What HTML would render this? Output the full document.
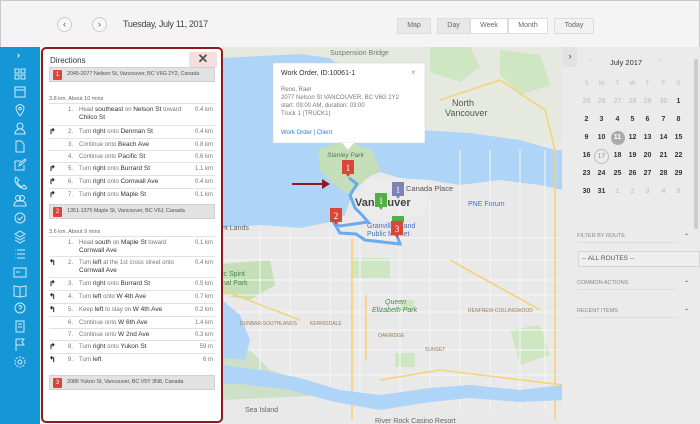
<!DOCTYPE html>
<html><head><meta charset="utf-8"><style>
*{margin:0;padding:0;box-sizing:border-box}
body{width:700px;height:424px;overflow:hidden;font-family:"Liberation Sans",sans-serif;background:#f4f4f4;position:relative;color:#333}
.top{position:absolute;left:0;top:0;width:700px;height:47px;background:#f4f4f4;border:1px solid #c8c8c8;border-bottom:none}
.circ{position:absolute;top:16px;width:15px;height:15px;border:1px solid #ccc;border-radius:50%;font-size:9px;line-height:13px;text-align:center;color:#555;background:#f7f7f7}
.btn{position:absolute;top:17px;height:16px;border:1px solid #ddd;font-size:7px;line-height:14px;text-align:center;color:#666}
.nav{position:absolute;left:0;top:47px;width:40px;height:377px;background:#1596d6}
.nav svg{position:absolute;left:13px}
.panel{position:absolute;left:41px;top:47px;width:182px;height:376px;background:#fff;border:2px solid #8e1b1b;border-radius:5px;overflow:hidden}
.map{position:absolute;left:222px;top:47px;width:341px;height:377px;overflow:hidden;background:#e9e9e9}
.side{position:absolute;left:562px;top:47px;width:138px;height:377px;background:#ebebeb}
.addr{position:absolute;left:6px;width:166px;height:15px;background:#e2e2e2;border:1px solid #d0d0d0;font-size:5.5px;line-height:13px;padding-left:17px;color:#555;letter-spacing:-0.1px}
.pin{position:absolute;left:3px;top:2px;width:9px;height:10px;background:#d9473a;border-radius:1px;color:#fff;font-size:6px;line-height:10px;text-align:center}
.sum{position:absolute;left:6px;font-size:5.5px;color:#666}
.row{position:absolute;left:6px;width:166px;border-top:1px solid #e2e2e2;font-size:6px;color:#777;line-height:8px}
.row .n{position:absolute;left:19px;top:2px}
.row .t{position:absolute;left:30px;top:2px;width:110px}
.row .d{position:absolute;right:2px;top:2px}
.row b{color:#333;font-weight:normal;font-size:6.5px}
.row .ar{position:absolute;left:0;top:2px;font-size:8px;color:#222;font-weight:bold}
.cal{position:absolute;font-size:7px;color:#333;text-align:center;width:15px}
.sh{position:absolute;left:15px;font-size:5.5px;color:#888;width:100px;border-bottom:1px solid #ddd;padding-bottom:3px}
.sh span{position:absolute;right:-12px;color:#444;font-size:6px}
</style></head><body>
<div class="top">
 <div class="circ" style="left:56px">‹</div>
 <div class="circ" style="left:91px">›</div>
 <div style="position:absolute;left:122px;top:18px;font-size:9px;color:#444;letter-spacing:-0.3px">Tuesday, July 11, 2017</div>
 <div class="btn" style="left:396px;width:34px;background:#e8e8e8">Map</div>
 <div class="btn" style="left:436px;width:33px;background:#e8e8e8">Day</div>
 <div class="btn" style="left:469px;width:38px;background:#fff">Week</div>
 <div class="btn" style="left:507px;width:40px;background:#fff">Month</div>
 <div class="btn" style="left:553px;width:40px;background:#f2f2f2">Today</div>
</div>
<div class="nav">
 <div style="position:absolute;left:17px;top:3px;color:#fff;font-size:9px;font-weight:bold">›</div>
 <svg width="14" height="320" style="top:21px" fill="none" stroke="#cfe9f7" stroke-width="1">
  <g transform="translate(0,0)"><rect x="2" y="1" width="4" height="4"/><rect x="8" y="1" width="4" height="4"/><rect x="2" y="7" width="4" height="4"/><rect x="8" y="7" width="4" height="4"/></g>
  <g transform="translate(0,18)"><rect x="2" y="1" width="10" height="10"/><line x1="2" y1="4" x2="12" y2="4"/></g>
  <g transform="translate(0,36)"><path d="M7 12C4 8 3 6 3 4.5a4 4 0 0 1 8 0C11 6 10 8 7 12z"/><circle cx="7" cy="4.5" r="1.3"/></g>
  <g transform="translate(0,54)"><circle cx="7" cy="4" r="3"/><path d="M2 12c0-3 2-5 5-5s5 2 5 5z"/></g>
  <g transform="translate(0,72)"><path d="M3 1h5l3 3v8H3z"/></g>
  <g transform="translate(0,90)"><path d="M2 3h6M2 3v9h9V7"/><path d="M6 8l1-3 5-4 1 1-5 5z"/></g>
  <g transform="translate(0,108)"><path d="M3 1l3 3-2 2c1 2 3 4 5 5l2-2 3 3-2 1C6 12 2 8 2 3z"/></g>
  <g transform="translate(0,126)"><circle cx="5" cy="4" r="2.5"/><circle cx="9" cy="4" r="2.5"/><path d="M1 12c0-3 2-5 4-5h4c2 0 4 2 4 5z"/></g>
  <g transform="translate(0,144)"><circle cx="7" cy="6" r="5"/><path d="M4.5 6l2 2 3-3.5"/></g>
  <g transform="translate(0,162)"><path d="M7 1l5 3-5 3-5-3z M2 7l5 3 5-3 M2 10l5 3 5-3"/></g>
  <g transform="translate(0,180)"><path d="M4 2h8M4 6h8M4 10h8M2 2h0.5M2 6h0.5M2 10h0.5"/></g>
  <g transform="translate(0,198)"><rect x="1" y="2" width="12" height="9"/><path d="M3 6h4"/></g>
  <g transform="translate(0,216)"><path d="M1 2l6 1 6-1v10l-6 1-6-1z M7 3v10"/></g>
  <g transform="translate(0,234)"><circle cx="7" cy="6" r="5"/><path d="M5.5 4.5a1.5 1.5 0 1 1 1.5 2v1M7 9v.5"/></g>
  <g transform="translate(0,252)"><rect x="3" y="1" width="8" height="11"/><path d="M5 4h4M5 7h4"/></g>
  <g transform="translate(0,270)"><path d="M3 13V1M3 1h8l-2 3 2 3H3"/></g>
  <g transform="translate(0,288)"><circle cx="7" cy="6" r="2"/><circle cx="7" cy="6" r="5" stroke-dasharray="2 1.2"/></g>
 </svg>
</div>
<div class="map">
<svg width="341" height="377" viewBox="222 47 341 377">
 <rect x="222" y="47" width="341" height="377" fill="#e9e9e9"/>
 <path d="M222 47h341v95H222z" fill="#e6e9e0"/>
 <path d="M430 47l40 0 10 20-20 15-30-10z M500 50l40 5 10 30-30 10-20-20z" fill="#cfe6c2"/>
 <path d="M222 58 L300 54 L330 58 L345 70 L350 95 L365 128 L420 130 L470 133 L520 140 L555 150 L563 150 L563 190 L540 185 L500 180 L460 185 L430 180 L400 178 L380 172 L360 180 L350 200 L345 215 L330 222 L300 228 L260 225 L222 228 Z" fill="#aed4f7"/>
 <path d="M318 150 L345 140 L372 150 L380 170 L365 180 L350 195 L335 185 L320 170 Z" fill="#c5dfb8"/>
 <path d="M365 180 L400 178 L430 182 L425 215 L385 222 L352 215 Z" fill="#ececec"/>
 <path d="M222 264 L270 260 L275 285 L250 300 L222 295Z" fill="#c5dfb8"/>
 <rect x="352" y="258" width="38" height="20" fill="#cfe6c2"/>
 <rect x="400" y="300" width="14" height="10" fill="#cfe6c2"/>
 <rect x="395" y="353" width="20" height="14" fill="#cfe6c2"/>
 <path d="M510 330 l30 -5 l10 30 l-30 10z" fill="#cfe6c2"/>
 <path d="M222 330 L245 345 L270 370 L300 380 L330 395 L222 400Z" fill="#cfe0c8"/>
 <g stroke="#f8f8f8" stroke-width="1">
  <path d="M222 238H563M222 260H563M222 280H563M222 295H563M222 312H563M222 330H563M222 350H563M222 375H563"/>
  <path d="M260 230V380M290 230V390M330 230V390M360 230V400M400 200V400M430 200V400M460 150V410M490 150V410M520 150V410M545 150V410"/>
 </g>
 <g stroke="#f6d27a" stroke-width="1.6" fill="none">
  <path d="M352 238V420"/><path d="M366 295V360"/><path d="M440 100 L500 80 L545 110 L555 150V420"/>
  <path d="M450 260 L540 310"/><path d="M380 380 L440 370 L563 385"/><path d="M222 290 L300 320"/>
 </g>
 <path d="M222 365 L260 370 L300 378 L340 390 L380 395 L430 388 L470 385 L520 390 L563 385 L563 400 L520 402 L470 398 L430 402 L380 410 L335 402 L290 390 L240 384 L222 384Z" fill="#aed4f7"/>
 <path d="M222 300 L240 315 L250 340 L245 360 L222 358Z" fill="#aed4f7"/>
 <path d="M349 178 L357 184 L350 195 L355 208 L363 216 L368 222 L340 226 L334 223 L340 233 L356 234 L365 240 L400 244 L395 230 L400 218" stroke="#6aaaf0" stroke-width="3" fill="none"/>
 <g font-family="Liberation Sans" font-size="6" fill="#666">
  <text x="330" y="55" font-size="7" fill="#777">Suspension Bridge</text>
  <text x="452" y="106" font-size="9" fill="#555">North</text>
  <text x="445" y="116" font-size="9" fill="#555">Vancouver</text>
  <text x="327" y="157" font-style="italic" font-size="6.5" fill="#557755">Stanley Park</text>
  <text x="355" y="206" font-size="11" font-weight="bold" fill="#444">Vancouver</text>
  <text x="406" y="191" font-size="7.5" fill="#555">Canada Place</text>
  <text x="468" y="206" font-size="7" fill="#4a6fd0">PNE Forum</text>
  <text x="367" y="228" font-size="7" fill="#4a6fd0">Granville Island</text>
  <text x="367" y="236" font-size="7" fill="#4a6fd0">Public Market</text>
  <text x="222" y="230" font-size="7">nt Lands</text>
  <text x="385" y="304" font-size="7" font-style="italic" fill="#4a8a4a">Queen</text>
  <text x="372" y="312" font-size="7" font-style="italic" fill="#4a8a4a">Elizabeth Park</text>
  <text x="222" y="276" font-size="7" fill="#4a8a4a">ic Spirit</text>
  <text x="222" y="285" font-size="7" fill="#4a8a4a">nal Park</text>
  <text x="245" y="412" font-size="7">Sea Island</text>
  <text x="375" y="423" font-size="7">River Rock Casino Resort</text>
  <text x="468" y="312" font-size="5" fill="#9a7a55">RENFREW-COLLINGWOOD</text>
  <text x="240" y="325" font-size="5" fill="#9a7a55">DUNBAR-SOUTHLANDS</text>
  <text x="310" y="325" font-size="5" fill="#9a7a55">KERRISDALE</text>
  <text x="378" y="337" font-size="5" fill="#9a7a55">OAKRIDGE</text>
  <text x="425" y="351" font-size="5" fill="#9a7a55">SUNSET</text>
 </g>
 <g font-family="Liberation Serif" font-size="9" fill="#fff" text-anchor="middle">
  <path d="M342 160h12v14h-4l-2 3-2-3h-4z" fill="#d9473a"/><text x="348" y="171">1</text>
  <path d="M330 208h12v14h-4l-2 3-2-3h-4z" fill="#d9473a"/><text x="336" y="219">2</text>
  <path d="M392 182h12v14h-4l-2 3-2-3h-4z" fill="#7e83b5"/><text x="398" y="193">1</text>
  <path d="M375 193h12v14h-4l-2 3-2-3h-4z" fill="#52b045"/><text x="381" y="204">1</text>
  <path d="M392 216h12v6h-12z" fill="#52b045"/>
  <path d="M391 221h12v14h-4l-2 3-2-3h-4z" fill="#d9473a"/><text x="397" y="232">3</text>
 </g>
 <path d="M292 184h32" stroke="#8e1b1b" stroke-width="2"/><path d="M322 179l8 5-8 5z" fill="#8e1b1b"/>
 <rect x="273" y="63" width="152" height="80" fill="#fff" stroke="#ccc" stroke-width="0.5"/>
 <path d="M342 143l6 7 6-7z" fill="#fff"/>
 <g font-family="Liberation Sans" font-size="6" fill="#777">
  <text x="281" y="75" font-size="7" fill="#333">Work Order, ID:10061-1</text>
  <text x="411" y="75" font-size="8" fill="#999">×</text>
  <text x="281" y="91">Reno, Rael</text>
  <text x="281" y="99">2077 Nelson St VANCOUVER, BC V6G 2Y2</text>
  <text x="281" y="107">start: 09:00 AM, duration: 03:00</text>
  <text x="281" y="115">Truck 1 (TRUCK1)</text>
  <text x="281" y="134" fill="#2a7fc7">Work Order | Client</text>
 </g>
</svg>
</div>
<div class="panel">
 <div style="position:absolute;left:7px;top:7px;font-size:8px;color:#333">Directions</div>
 <div style="position:absolute;left:146px;top:3px;width:28px;height:15px;background:#f7dede;color:#555;font-size:13px;font-weight:bold;text-align:center;line-height:14px">✕</div>
 <div class="addr" style="top:18px"><span class="pin">1</span>2045-2077 Nelson St, Vancouver, BC V6G 2Y2, Canada</div>
 <div class="sum" style="top:47px">3.8 km. About 10 mins</div>
 <div class="row" style="top:54px;height:22px"><span class="n">1.</span><span class="t">Head <b>southeast</b> on <b>Nelson St</b> toward <b>Chilco St</b></span><span class="d">0.4 km</span></div>
 <div class="row" style="top:76px;height:13px"><span class="ar">↱</span><span class="n">2.</span><span class="t">Turn <b>right</b> onto <b>Denman St</b></span><span class="d">0.4 km</span></div>
 <div class="row" style="top:89px;height:12px"><span class="n">3.</span><span class="t">Continue onto <b>Beach Ave</b></span><span class="d">0.8 km</span></div>
 <div class="row" style="top:101px;height:12px"><span class="n">4.</span><span class="t">Continue onto <b>Pacific St</b></span><span class="d">0.6 km</span></div>
 <div class="row" style="top:113px;height:13px"><span class="ar">↱</span><span class="n">5.</span><span class="t">Turn <b>right</b> onto <b>Burrard St</b></span><span class="d">1.1 km</span></div>
 <div class="row" style="top:126px;height:13px"><span class="ar">↱</span><span class="n">6.</span><span class="t">Turn <b>right</b> onto <b>Cornwall Ave</b></span><span class="d">0.4 km</span></div>
 <div class="row" style="top:139px;height:14px"><span class="ar">↱</span><span class="n">7.</span><span class="t">Turn <b>right</b> onto <b>Maple St</b></span><span class="d">0.1 km</span></div>
 <div class="addr" style="top:155px"><span class="pin">2</span>1351-1375 Maple St, Vancouver, BC V6J, Canada</div>
 <div class="sum" style="top:180px">3.6 km. About 9 mins</div>
 <div class="row" style="top:187px;height:20px"><span class="n">1.</span><span class="t">Head <b>south</b> on <b>Maple St</b> toward <b>Cornwall Ave</b></span><span class="d">0.1 km</span></div>
 <div class="row" style="top:207px;height:21px"><span class="ar">↰</span><span class="n">2.</span><span class="t">Turn <b>left</b> at the 1st cross street onto <b>Cornwall Ave</b></span><span class="d">0.4 km</span></div>
 <div class="row" style="top:228px;height:13px"><span class="ar">↱</span><span class="n">3.</span><span class="t">Turn <b>right</b> onto <b>Burrard St</b></span><span class="d">0.5 km</span></div>
 <div class="row" style="top:241px;height:13px"><span class="ar">↰</span><span class="n">4.</span><span class="t">Turn <b>left</b> onto <b>W 4th Ave</b></span><span class="d">0.7 km</span></div>
 <div class="row" style="top:254px;height:13px"><span class="ar">↰</span><span class="n">5.</span><span class="t">Keep <b>left</b> to stay on <b>W 4th Ave</b></span><span class="d">0.2 km</span></div>
 <div class="row" style="top:267px;height:12px"><span class="n">6.</span><span class="t">Continue onto <b>W 6th Ave</b></span><span class="d">1.4 km</span></div>
 <div class="row" style="top:279px;height:12px"><span class="n">7.</span><span class="t">Continue onto <b>W 2nd Ave</b></span><span class="d">0.3 km</span></div>
 <div class="row" style="top:291px;height:13px"><span class="ar">↱</span><span class="n">8.</span><span class="t">Turn <b>right</b> onto <b>Yukon St</b></span><span class="d">59 m</span></div>
 <div class="row" style="top:304px;height:14px"><span class="ar">↰</span><span class="n">9.</span><span class="t">Turn <b>left</b></span><span class="d">6 m</span></div>
 <div class="addr" style="top:326px"><span class="pin">3</span>2086 Yukon St, Vancouver, BC V5Y 3N8, Canada</div>
</div>
<div class="side">
 <div style="position:absolute;left:1px;top:0;width:14px;height:20px;background:#e2e2e2;font-size:9px;color:#444;text-align:center;line-height:18px">›</div>
 <div style="position:absolute;left:132px;top:12px;width:4px;height:170px;background:#ccc;border-radius:2px"></div>
 <div style="position:absolute;left:27px;top:9px;font-size:8px;color:#ccc">‹</div>
 <div style="position:absolute;left:96px;top:9px;font-size:8px;color:#ccc">›</div>
 <div style="position:absolute;left:48px;top:11px;font-size:7.5px;color:#333">July 2017</div>
 <div id="cal"></div>
 <div class="sh" style="top:186px">FILTER BY ROUTE<span>⌃</span></div>
 <div style="position:absolute;left:16px;top:204px;width:122px;height:16px;border:1px solid #d5d5d5;background:#eee;font-size:6.5px;color:#555;line-height:14px;padding-left:3px">-- ALL ROUTES --</div>
 <div class="sh" style="top:233px">COMMON ACTIONS<span>⌃</span></div>
 <div class="sh" style="top:261px">RECENT ITEMS<span>⌃</span></div>
</div>
<script>
var c=document.getElementById('cal'),h='';
var xs=[0,15,31,46,61,77,92];
var hd=['S','M','T','W','T','F','S'];
for(var i=0;i<7;i++)h+='<div class="cal" style="left:'+(24+xs[i]-7)+'px;top:34px;color:#bbb;font-size:6px">'+hd[i]+'</div>';
var days=[25,26,27,28,29,30];for(var d=1;d<=31;d++)days.push(d);days.push(1,2,3,4,5);
for(var k=0;k<days.length;k++){var r=Math.floor(k/7),col=k%7;var grey=(k<6||k>36);
var st='left:'+(24+xs[col]-7)+'px;top:'+(51+r*18)+'px;'+(grey?'color:#bbb;':'font-weight:bold;');
var inner=days[k];
if(!grey&&days[k]==11)inner='<span style="display:inline-block;width:14px;height:14px;border-radius:50%;background:#aaa;color:#fff;line-height:14px;margin-top:-3px">11</span>';
if(!grey&&days[k]==17)inner='<span style="display:inline-block;width:15px;height:15px;border-radius:50%;border:1px solid #bbb;color:#999;line-height:13px;margin-top:-3px;font-weight:normal">17</span>';
h+='<div class="cal" style="'+st+'">'+inner+'</div>';}
c.innerHTML=h;
</script>
</body></html>
